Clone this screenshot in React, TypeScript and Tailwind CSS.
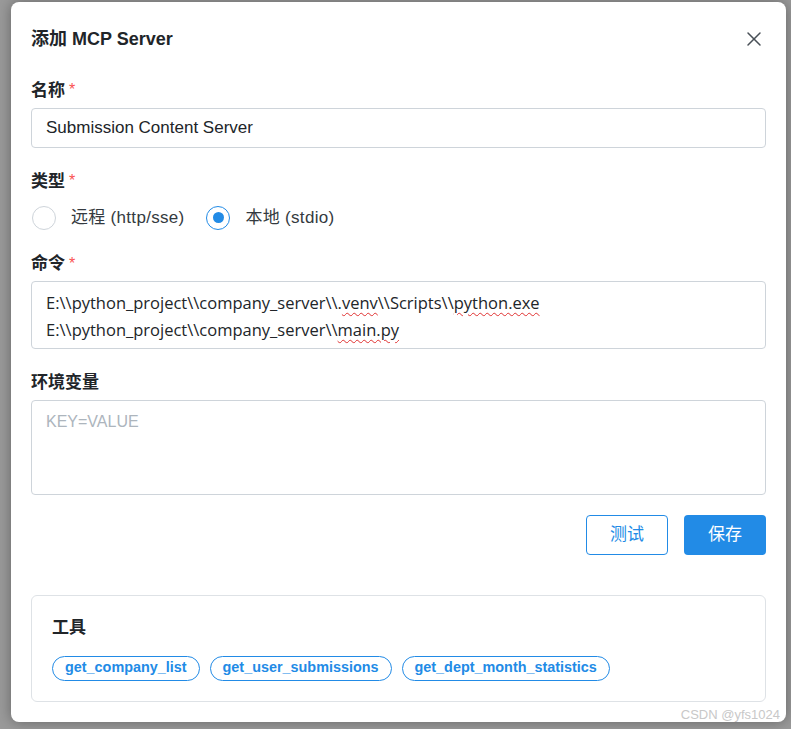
import { X } from 'lucide-react';

const tools = ['get_company_list', 'get_user_submissions', 'get_dept_month_statistics'];

function Label({ text, required }: { text: string; required?: boolean }) {
  return (
    <div className="h-[22px] flex items-center text-[17px] font-bold text-[#212529] leading-none">
      {text}
      {required && <span className="ml-[4px] text-[#fa5252] font-normal text-[16px]">*</span>}
    </div>
  );
}

function Radio({ checked, label }: { checked?: boolean; label: string }) {
  return (
    <div className="flex items-center gap-[15px]">
      <div
        className={
          'w-[24px] h-[24px] rounded-full border flex items-center justify-center ' +
          (checked ? 'border-[#228be6]' : 'border-[#ced4da]')
        }
      >
        {checked && <div className="w-[11px] h-[11px] rounded-full bg-[#228be6]" />}
      </div>
      <span className="text-[17px] tracking-[0.3px] text-[#343a40]">{label}</span>
    </div>
  );
}

const bs = '\\\\';
const wavy = 'underline decoration-wavy decoration-[#e03131] decoration-1 underline-offset-[3px]';

export default function App() {
  return (
    <div
      className="w-[791px] h-[729px] bg-[#9a9a9a] overflow-hidden pt-[2px] pl-[11px]"
      style={{ fontFamily: '"Liberation Sans", "Noto Sans CJK SC", sans-serif' }}
    >
      <div className="relative w-[775px] h-[720px] bg-white rounded-[8px] shadow-[0_0_14px_rgba(0,0,0,0.35)] px-[20px] pt-[20px]">
        {/* header */}
        <div className="h-[34px] flex items-center justify-between">
          <h2 className="text-[18px] font-bold text-[#212529]">添加 MCP Server</h2>
          <button className="w-[28px] h-[28px] flex items-center justify-center mr-[-2px] text-[#495057]">
            <X size={24} strokeWidth={1.5} />
          </button>
        </div>

        <div className="mt-[23px]">
          <Label text="名称" required />
          <div className="mt-[7px] h-[40px] border border-[#ced4da] rounded-[4px] px-[14px] flex items-center text-[17px] text-[#212529]">
            Submission Content Server
          </div>
        </div>

        <div className="mt-[22px]">
          <Label text="类型" required />
          <div className="mt-[13px] flex items-center gap-[22px] pl-[1px]">
            <Radio label="远程 (http/sse)" />
            <Radio checked label="本地 (stdio)" />
          </div>
        </div>

        <div className="mt-[22px]">
          <Label text="命令" required />
          <div
            className="mt-[6px] h-[68px] border border-[#ced4da] rounded-[4px] px-[14px] py-[7px] text-[16.5px] leading-[27px] text-[#212529] whitespace-nowrap"
            style={{ fontFamily: '"Open Sans", "Noto Sans CJK SC", sans-serif' }}
          >
            <div>
              E:{bs}python_project{bs}company_server{bs}.<span className={wavy}>venv</span>
              {bs}Scripts{bs}
              <span className={wavy}>python.exe</span>
            </div>
            <div>
              E:{bs}python_project{bs}company_server{bs}
              <span className={wavy}>main.py</span>
            </div>
          </div>
        </div>

        <div className="mt-[23px]">
          <Label text="环境变量" />
          <div className="mt-[6px] h-[95px] border border-[#ced4da] rounded-[4px] px-[14px] py-[7px] text-[16px] leading-[27px] text-[#adb5bd]">
            KEY=VALUE
          </div>
        </div>

        <div className="mt-[20px] flex justify-end gap-[16px]">
          <button className="w-[82px] h-[40px] rounded-[4px] border border-[#228be6] text-[#228be6] text-[17px]">
            测试
          </button>
          <button className="w-[82px] h-[40px] rounded-[4px] bg-[#228be6] text-white text-[17px]">
            保存
          </button>
        </div>

        <div className="mt-[40px] h-[107px] border border-[#dee2e6] rounded-[6px] px-[20px] pt-[21px]">
          <div className="text-[17px] font-bold text-[#212529] leading-[22px]">工具</div>
          <div className="mt-[17px] flex gap-[10px]">
            {tools.map((t) => (
              <span
                key={t}
                className="h-[25px] px-[12px] rounded-full border border-[#228be6] text-[#228be6] text-[14.4px] font-bold flex items-center"
              >
                {t}
              </span>
            ))}
          </div>
        </div>

        <div className="absolute right-[6px] bottom-[-2px] text-[13px] text-[#c8c8c8]">CSDN @yfs1024</div>
      </div>
    </div>
  );
}
